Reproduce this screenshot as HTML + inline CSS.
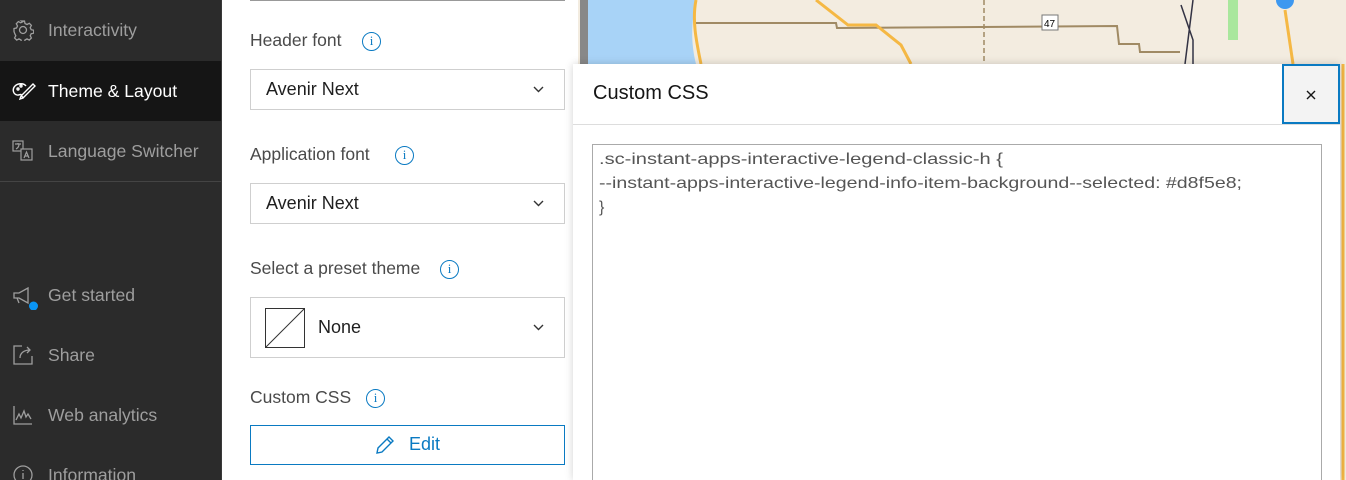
<!DOCTYPE html>
<html><head><meta charset="utf-8"><style>
*{box-sizing:border-box;margin:0;padding:0}
html,body{width:1346px;height:480px;overflow:hidden}
body{position:relative;font-family:"Liberation Sans",sans-serif;background:#fff}
.side{position:absolute;left:0;top:0;width:222px;height:480px;background:#2b2b2b;border-right:1px solid #3a3a3a;overflow:hidden}
.item{position:absolute;left:0;width:221px;height:60px;color:#9e9e9e;font-size:17.6px;line-height:60px;padding-left:48px;white-space:nowrap}
.item svg{position:absolute;left:12px;top:19px}
.active{background:#151515;color:#fff}
.panel{position:absolute;left:222px;top:0;width:356px;height:480px;background:#fff}
.lbl{position:absolute;left:250px;font-size:17.5px;color:#4a4a4a}
.info{position:absolute;width:19px;height:19px;border:1.5px solid #0a7ac2;border-radius:50%;color:#0a7ac2;font-size:13px;text-align:center;line-height:16px;font-family:"Liberation Serif",serif}
.sel{position:absolute;left:250px;width:315px;border:1px solid #cfcfcf;background:#fff;font-size:18px;color:#1f1f1f}
.chev{position:absolute;right:20px;top:50%;margin-top:-4px}
.map{position:absolute;left:578px;top:0;width:768px;height:480px;background:#f3ece0;overflow:hidden}
.modal{position:absolute;left:573px;top:64px;width:767px;height:416px;background:#fff;box-shadow:0 0 8px rgba(0,0,0,.18);overflow:hidden}
</style></head><body>
<div class="side">
 <div class="item" style="top:0;"><svg width="22" height="22" viewBox="0 0 22 22" fill="none" stroke="#9e9e9e" stroke-width="1.3"><circle cx="11" cy="11" r="3.5"/><path d="M9.5 2h3l.5 2.5 2 1 2.3-1.2 2.1 2.1-1.2 2.3 1 2 2.5.5v3l-2.5.5-1 2 1.2 2.3-2.1 2.1-2.3-1.2-2 1-.5 2.5h-3l-.5-2.5-2-1-2.3 1.2-2.1-2.1 1.2-2.3-1-2L2 12.5v-3l2.5-.5 1-2-1.2-2.3 2.1-2.1 2.3 1.2 2-1z"/></svg>Interactivity</div>
 <div class="item active" style="top:61px;"><svg width="24" height="22" viewBox="0 0 24 22" fill="none" stroke="#fff" stroke-width="1.4"><path d="M14 6C12 3 6 3 3 6s-2 8 2 9c2 .5 3-1 4-.5s0 3 3 3"/><circle cx="6" cy="9" r="1"/><circle cx="9" cy="6" r="1"/><path d="M21 4L9 16l-1 3 3-1L23 6z"/></svg>Theme &amp; Layout</div>
 <div class="item" style="top:121px;"><svg width="22" height="22" viewBox="0 0 22 22" fill="none" stroke="#9e9e9e" stroke-width="1.2"><rect x="1" y="1" width="10" height="10"/><rect x="9" y="9" width="11" height="11" fill="#2b2b2b"/><path d="M12 18l2.5-6 2.5 6M13 16h3M3 4h6M6 3v1M4 9c2-1 3-3 3-5"/></svg>Language Switcher</div>
 <div style="position:absolute;top:181px;left:0;width:221px;height:1px;background:#444"></div>
 <div class="item" style="top:265px;"><svg width="26" height="26" viewBox="0 0 26 26" fill="none" stroke="#9e9e9e" stroke-width="1.3"><path d="M2 9h5l9-5v15l-9-5H2zM5 14l2 5"/><circle cx="21.5" cy="22" r="4.5" fill="#0a95f5" stroke="none"/></svg>Get started</div>
 <div class="item" style="top:325px;"><svg width="22" height="22" viewBox="0 0 22 22" fill="none" stroke="#9e9e9e" stroke-width="1.3"><path d="M10 2H2v18h18v-8"/><path d="M8 14c0-5 4-8 10-8M15 3l3 3-3 3"/></svg>Share</div>
 <div class="item" style="top:385px;"><svg width="22" height="22" viewBox="0 0 22 22" fill="none" stroke="#9e9e9e" stroke-width="1.3"><path d="M2 2v18h18M4 16l3-6 2 4 3-7 2 6 2-3 3 5"/></svg>Web analytics</div>
 <div class="item" style="top:445px;height:35px;overflow:hidden"><svg width="22" height="22" viewBox="0 0 22 22" fill="none" stroke="#9e9e9e" stroke-width="1.3"><circle cx="11" cy="11" r="9"/><path d="M11 9v6M11 6v1"/></svg>Information</div>
</div>
<div class="panel"></div>
<div style="position:absolute;left:250px;top:0;width:315px;height:1px;background:#999"></div>
<div class="lbl" style="top:30px">Header font</div><div class="info" style="left:362px;top:32px">i</div>
<div class="sel" style="top:69px;height:41px;line-height:39px;padding-left:15px">Avenir Next<svg class="chev" width="11" height="7" viewBox="0 0 11 7"><path d="M1 1l4.5 4.5L10 1" fill="none" stroke="#333" stroke-width="1.4"/></svg></div>
<div class="lbl" style="top:144px">Application font</div><div class="info" style="left:395px;top:146px">i</div>
<div class="sel" style="top:183px;height:41px;line-height:39px;padding-left:15px">Avenir Next<svg class="chev" width="11" height="7" viewBox="0 0 11 7"><path d="M1 1l4.5 4.5L10 1" fill="none" stroke="#333" stroke-width="1.4"/></svg></div>
<div class="lbl" style="top:258px">Select a preset theme</div><div class="info" style="left:440px;top:260px">i</div>
<div class="sel" style="top:297px;height:61px;line-height:59px;padding-left:67px">None
 <svg style="position:absolute;left:14px;top:10px" width="40" height="40" viewBox="0 0 40 40"><rect x=".5" y=".5" width="39" height="39" fill="#fff" stroke="#333"/><path d="M0 40L40 0" stroke="#333"/></svg>
 <svg class="chev" width="11" height="7" viewBox="0 0 11 7"><path d="M1 1l4.5 4.5L10 1" fill="none" stroke="#333" stroke-width="1.4"/></svg></div>
<div class="lbl" style="top:387px">Custom CSS</div><div class="info" style="left:366px;top:389px">i</div>
<div style="position:absolute;left:250px;top:425px;width:315px;height:40px;border:1.5px solid #0a7ac2;color:#0a7ac2;font-size:18px;line-height:37px">
 <svg style="position:absolute;left:124px;top:9px" width="20" height="20" viewBox="0 0 20 20" fill="none" stroke="#0a7ac2" stroke-width="1.4"><path d="M14 2l4 4L7 17l-5 1 1-5zM12 4l4 4"/></svg>
 <span style="position:absolute;left:158px;top:0">Edit</span></div>

<div class="map">
 <div style="position:absolute;left:2px;top:0;width:8px;height:480px;background:#888"></div>
 <svg style="position:absolute;left:10px;top:0" width="758" height="480" viewBox="0 0 758 480">
  <path d="M0 0h108c-4 20-6 40 0 64H0z" fill="#a8d3f7"/>
  <path d="M108 0c-4 20 0 40 5 64" stroke="#f5b844" stroke-width="3" fill="none"/>
  <path d="M108 23h140l1 5 280-2 2 18h20l1 8h40" stroke="#a08a64" stroke-width="2" fill="none"/>
  <path d="M228 0l32 25h28l25 20 10 19" stroke="#f5b844" stroke-width="3" fill="none"/>
  <path d="M396 0v64" stroke="#a08a64" stroke-width="1.5" stroke-dasharray="5 3"/>
  <rect x="454" y="15" width="16" height="15" fill="#fff" stroke="#777"/><text x="456" y="27" font-size="10" font-family="Liberation Sans">47</text>
  <path d="M593 5l12 35 0 24M605 0l-8 64" stroke="#334" stroke-width="1.5" fill="none"/>
  <rect x="640" y="0" width="10" height="40" fill="#a9e79d"/>
  <circle cx="697" cy="0" r="9" fill="#3d98f0"/>
  <path d="M697 10l8 54" stroke="#f5b844" stroke-width="3" fill="none"/>
  <path d="M755 64v416" stroke="#f5b844" stroke-width="3"/>
 </svg>
</div>

<div class="modal">
 <div style="position:absolute;left:20px;top:18px;font-size:20px;color:#151515">Custom CSS</div>
 <div style="position:absolute;left:709px;top:0;width:58px;height:60px;background:#f3f3f3;border:2px solid #0a7ac2"><svg style="position:absolute;left:22px;top:24px" width="10" height="10" viewBox="0 0 10 10"><path d="M1 1l8 8M9 1L1 9" stroke="#151515" stroke-width="1.4"/></svg></div>
 <div style="position:absolute;left:0;top:60px;width:767px;height:1px;background:#ddd"></div>
 <div style="position:absolute;left:19px;top:80px;width:730px;height:336px;border:1px solid #aaa;border-bottom:none"></div>
 <svg style="position:absolute;left:20px;top:82px" width="700" height="80"><g font-family="Liberation Sans" font-size="16" fill="#555">
  <text x="6" y="18" textLength="404" lengthAdjust="spacingAndGlyphs">.sc-instant-apps-interactive-legend-classic-h {</text>
  <text x="6" y="42" textLength="643" lengthAdjust="spacingAndGlyphs">--instant-apps-interactive-legend-info-item-background--selected: #d8f5e8;</text>
  <text x="6" y="66">}</text></g></svg>
</div>
</body></html>
